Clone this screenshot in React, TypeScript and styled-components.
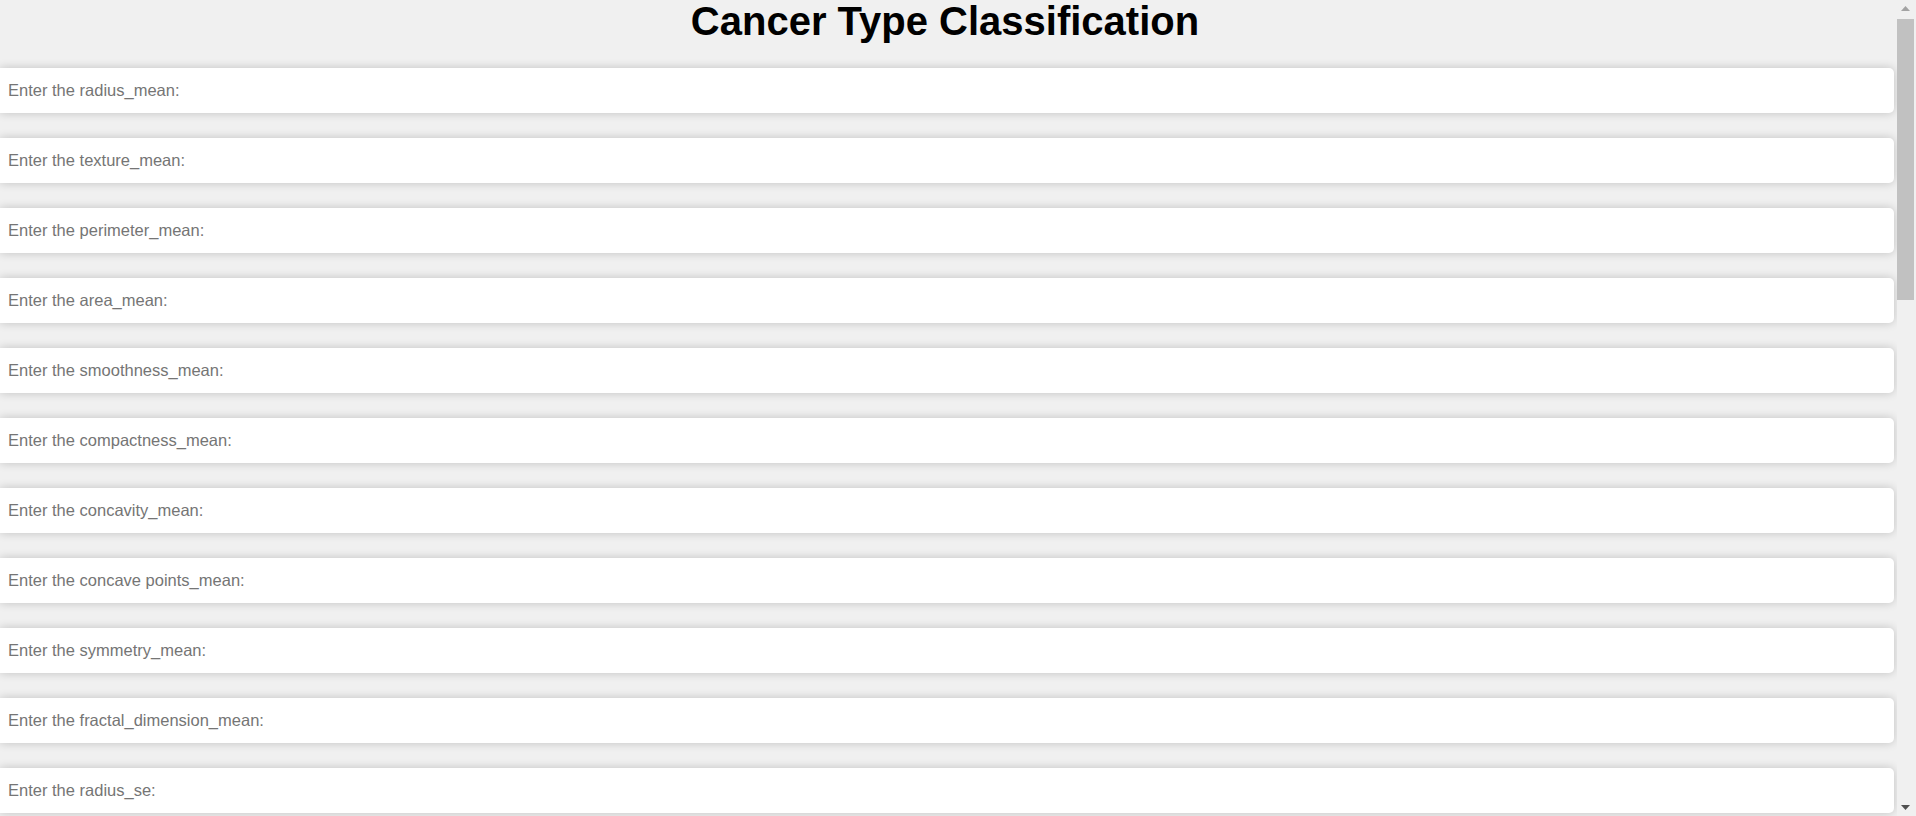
import React from "react";
import styled, { createGlobalStyle } from "styled-components";

const GlobalStyle = createGlobalStyle`
  html, body {
    margin: 0;
    padding: 0;
    height: 100%;
    overflow: hidden;
    background: #f0f0f0;
    font-family: "Liberation Sans", Arial, sans-serif;
  }
  #root { height: 100%; }
`;

const Page = styled.div`
  display: flex;
  flex-direction: row;
  height: 100vh;
  background: #f0f0f0;
`;

const Main = styled.main`
  flex: 1;
  min-width: 0;
  overflow: hidden;
  display: flex;
  flex-direction: column;
`;

const Title = styled.h1`
  margin: 0 0 26px;
  padding: 0 7px 0 0;
  font-family: "Liberation Sans", Arial, sans-serif;
  font-weight: 700;
  font-size: 40px;
  line-height: 42px;
  text-align: center;
  color: #000;
`;

const Form = styled.form`
  display: flex;
  flex-direction: column;
  gap: 25px;
`;

const Field = styled.input`
  box-sizing: border-box;
  display: block;
  height: 45px;
  margin: 0 3px 0 0;
  padding: 0 8px;
  border: none;
  border-radius: 0 5px 5px 0;
  background: #fff;
  box-shadow: 0 0 10px rgba(0, 0, 0, 0.2);
  font-family: "Liberation Sans", Arial, sans-serif;
  font-size: 16.5px;
  color: #333;
  outline: none;
  &::placeholder {
    color: #757575;
  }
`;

const ScrollBar = styled.div`
  width: 19px;
  flex: none;
  display: flex;
  flex-direction: column;
  background: #f0f0f0;
`;

const ArrowButton = styled.div`
  width: 17px;
  height: 17px;
  display: flex;
  align-items: center;
  justify-content: center;
`;

const Track = styled.div`
  flex: 1;
  display: flex;
  flex-direction: column;
  padding-top: 2px;
`;

const Thumb = styled.div`
  width: 17px;
  height: 281px;
  background: #c1c1c1;
`;

const features = [
  "radius_mean",
  "texture_mean",
  "perimeter_mean",
  "area_mean",
  "smoothness_mean",
  "compactness_mean",
  "concavity_mean",
  "concave points_mean",
  "symmetry_mean",
  "fractal_dimension_mean",
  "radius_se",
  "texture_se",
  "perimeter_se",
  "area_se",
  "smoothness_se",
  "compactness_se",
  "concavity_se",
  "concave points_se",
  "symmetry_se",
  "fractal_dimension_se",
  "radius_worst",
  "texture_worst",
  "perimeter_worst",
  "area_worst",
  "smoothness_worst",
  "compactness_worst",
  "concavity_worst",
  "concave points_worst",
  "symmetry_worst",
  "fractal_dimension_worst",
];

export default function App() {
  return (
    <>
      <GlobalStyle />
      <Page>
        <Main>
          <Title>Cancer Type Classification</Title>
          <Form onSubmit={(e) => e.preventDefault()}>
            {features.map((f) => (
              <Field key={f} type="text" name={f} placeholder={`Enter the ${f}:`} />
            ))}
          </Form>
        </Main>
        <ScrollBar>
          <ArrowButton>
            <svg width="9" height="5" viewBox="0 0 9 5">
              <polygon points="4.5,0 9,5 0,5" fill="#a3a3a3" />
            </svg>
          </ArrowButton>
          <Track>
            <Thumb />
          </Track>
          <ArrowButton>
            <svg width="9" height="5" viewBox="0 0 9 5">
              <polygon points="0,0 9,0 4.5,5" fill="#505050" />
            </svg>
          </ArrowButton>
        </ScrollBar>
      </Page>
    </>
  );
}
